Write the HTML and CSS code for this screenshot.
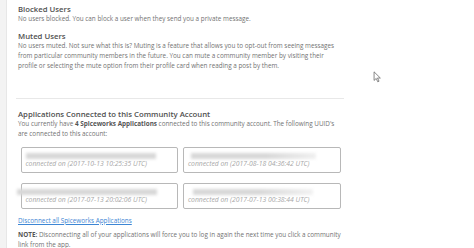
FILE: index.html
```html
<!DOCTYPE html>
<html>
<head>
<meta charset="utf-8">
<link rel="stylesheet" href="styles.css">
</head>
<body>
<div class="rail"></div>
<main class="content">
  <section class="group">
    <h2 class="title">Blocked Users</h2>
    <p class="text">No users blocked. You can block a user when they send you a private message.</p>
  </section>
  <section class="group muted">
    <h2 class="title">Muted Users</h2>
    <p class="text">No users muted. Not sure what this is? Muting is a feature that allows you to opt-out from seeing messages from particular community members in the future. You can mute a community member by visiting their profile or selecting the mute option from their profile card when reading a post by them.</p>
  </section>
  <hr class="divider">
  <section class="group apps">
    <h2 class="title">Applications Connected to this Community Account</h2>
    <p class="text">You currently have <b>4 Spiceworks Applications</b> connected to this community account. The following UUID's are connected to this account:</p>
    <div class="grid">
      <div class="card"><div class="redact r1"></div><div class="when">connected on (2017-10-13 10:25:35 UTC)</div></div>
      <div class="card"><div class="redact r2"></div><div class="when">connected on (2017-08-18 04:36:42 UTC)</div></div>
      <div class="card"><div class="redact r3"></div><div class="when">connected on (2017-07-13 20:02:06 UTC)</div></div>
      <div class="card"><div class="redact r4"></div><div class="when">connected on (2017-07-13 00:38:44 UTC)</div></div>
    </div>
    <a class="link" href="#">Disconnect all Spiceworks Applications</a>
    <p class="text note"><b>NOTE:</b> Disconnecting all of your applications will force you to log in again the next time you click a community link from the app.</p>
  </section>
</main>
<svg class="cursor" width="9" height="12" viewBox="0 0 10 14"><path d="M1 1 L1 11 L3.5 8.7 L5.3 12.6 L6.8 11.9 L5 8.2 L8.3 8.2 Z" fill="#fff" stroke="#666" stroke-width="0.9" stroke-linejoin="round"/></svg>
</body>
</html>
```
FILE: styles.css
```css
html, body {
  margin: 0;
  padding: 0;
  background: #fff;
}
body {
  width: 474px;
  height: 248px;
  overflow: hidden;
  position: relative;
  display: flex;
  font-family: "Open Sans", "DejaVu Sans", sans-serif;
}
.rail {
  width: 6px;
  flex: none;
  background: #f3f3f3;
  border-right: 1px solid #e7e7e7;
}
.content {
  width: 320px;
  margin-left: 11px;
  padding-top: 3.5px;
}
.title {
  margin: 0;
  font-size: 7.75px;
  line-height: 10px;
  font-weight: 600;
  color: #505050;
}
.text {
  margin: 0;
  font-size: 6.35px;
  line-height: 10px;
  color: #727272;
}
.text b { color: #555; font-weight: 700; }
.muted { margin-top: 7.5px; }
.divider {
  border: 0;
  border-top: 1px solid #e8e8e8;
  margin: 27px 0 0 -2px;
  width: 328px;
  height: 0;
}
.apps { margin-top: 10px; }
.grid {
  display: grid;
  grid-template-columns: 157px 158px;
  column-gap: 5.5px;
  row-gap: 10px;
  margin: 7.5px 0 0 2.5px;
}
.card {
  border: 1px solid #b8b8b8;
  border-radius: 2px;
  padding: 3px 4px 3px 4px;
  height: 26px;
  box-sizing: border-box;
  position: relative;
}
.redact {
  height: 6px;
  margin-top: 2px;
  background: #d8d8d8;
  filter: blur(1.6px);
}
.r1 { width: 130px; }
.r2 { width: 125px; margin-left: 3px; background: linear-gradient(90deg, #d8d8d8 60%, #f0f0f0); }
.r3 { width: 140px; margin-left: -9px; }
.r4 { width: 120px; margin-left: 5px; background: linear-gradient(90deg, #d8d8d8 55%, #f2f2f2); }
.when {
  font-size: 6.8px;
  line-height: 10px;
  font-style: italic;
  color: #a6a6a6;
  white-space: nowrap;
}
.link {
  display: block;
  margin-top: 7px;
  font-size: 6.35px;
  line-height: 10px;
  color: #3d86d4;
  text-decoration: underline;
}
.note { margin-top: 4px; margin-right: -9px; }
.cursor {
  position: absolute;
  left: 373px;
  top: 71px;
}
```
